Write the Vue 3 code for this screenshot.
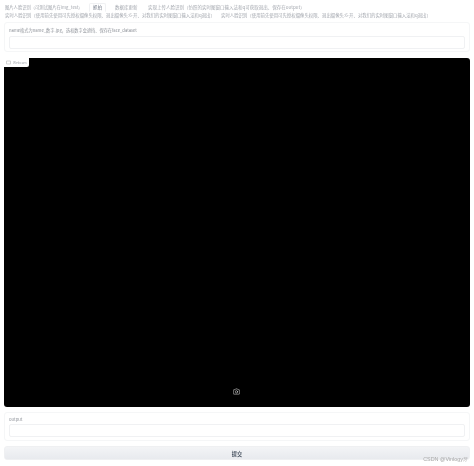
<script setup>
const row1 = [
  { text: '图片人脸识别（可测试图片在img_test）' },
  { text: '抓拍', active: true },
  { text: '数据库更新' },
  { text: '实现上传人脸识别（仿照的实时图窗口输入法和q可获取退出、保存在output）' },
]
const row2 = [
  '实时人脸识别（使用前先使用可先授权摄像头权限、退出摄像头:6-开、对我们的实时图窗口输入法和q退出）',
  '实时人脸识别（使用前先使用可先授权摄像头权限、退出摄像头:6-开、对我们的实时图窗口输入法和q退出）',
]
</script>

<template>
  <div class="page">
    <nav class="tabs">
      <div class="tab-row first">
        <span v-for="t in row1" :key="t.text" class="tab" :class="{ active: t.active }">{{ t.text }}</span>
      </div>
      <div class="tab-row second">
        <span v-for="t in row2" :key="t" class="tab">{{ t }}</span>
      </div>
    </nav>

    <section class="panel">
      <label class="label">name格式为name_数字.jpg，选权数字会遮挡、保存在face_dataset</label>
      <div class="input"></div>
    </section>

    <section class="video">
      <span class="badge">
        <svg class="badge-icon" viewBox="0 0 10 10"><rect x="1.5" y="2" width="7" height="6" fill="none" stroke="#aaa" stroke-width="1" /></svg>
        Webcam
      </span>
      <svg class="camera" viewBox="0 0 24 24" fill="none" stroke="#d8d8d8" stroke-width="2" stroke-linecap="round" stroke-linejoin="round">
        <path d="M23 19a2 2 0 0 1-2 2H3a2 2 0 0 1-2-2V8a2 2 0 0 1 2-2h4l2-3h6l2 3h4a2 2 0 0 1 2 2z" />
        <circle cx="12" cy="13" r="4" />
      </svg>
    </section>

    <section class="panel output">
      <label class="label">output</label>
      <div class="input"></div>
    </section>

    <button class="submit">提交</button>
    <span class="mark">CSDN @Vinlogy⽛</span>
  </div>
</template>

<style>
html, body { margin: 0; background: #fff; }
</style>

<style scoped>
.page {
  position: relative;
  box-sizing: border-box;
  width: 474px;
  height: 466px;
  padding: 3px 4px 0;
  overflow: hidden;
  font-family: "Noto Sans CJK SC", "Liberation Sans", sans-serif;
  color: #9a9ea6;
  background: #fff;
  filter: blur(0.35px);
}
.tabs { height: 16px; }
.tab-row { display: flex; white-space: nowrap; font-size: 4.5px; line-height: 8px; }
.first { height: 9px; }
.tab { color: #a3a7ae; }
.first .tab:nth-child(1) { width: 84px; padding-left: 1px; font-size: 4.3px; }
.first .tab.active {
  box-sizing: border-box;
  width: 17px;
  margin-right: 8px;
  text-align: center;
  color: #6b7280;
  border: 1px solid #f0f1f3;
  border-bottom-color: #fff;
  border-radius: 2px 2px 0 0;
  line-height: 7px;
}
.first .tab:nth-child(3) { width: 34px; padding-left: 1px; box-sizing: border-box; }
.second { line-height: 7px; font-size: 4.4px; }
.second .tab:first-child { width: 216px; padding-left: 1px; }
.panel {
  box-sizing: border-box;
  height: 30px;
  margin-top: 3px;
  padding: 4px;
  border: 1px solid #f5f6f7;
  border-radius: 3px;
  background: #fff;
}
.label { display: block; height: 9px; font-size: 4.2px; line-height: 7px; color: #8f939a; }
.input {
  box-sizing: border-box;
  height: 13px;
  border: 1px solid #f0f1f3;
  border-radius: 2px;
}
.video {
  position: relative;
  display: flex;
  align-items: flex-end;
  justify-content: center;
  box-sizing: border-box;
  height: 349px;
  margin-top: 6px;
  padding-bottom: 12px;
  padding-right: 1px;
  background: #000;
  border-radius: 3px;
}
.badge {
  position: absolute;
  top: 0;
  left: 0;
  display: flex;
  align-items: center;
  gap: 2px;
  box-sizing: border-box;
  width: 25px;
  height: 9px;
  padding-left: 2px;
  font-size: 3.4px;
  color: #a3a7ae;
  background: #fff;
  border-radius: 0 0 2px 0;
}
.badge-icon { width: 5px; height: 5px; }
.camera { width: 7px; height: 7px; }
.output { height: 29px; margin-top: 5px; padding-top: 3px; }
.output .label { height: 8px; }
.submit {
  display: block;
  box-sizing: border-box;
  width: 100%;
  height: 14px;
  margin-top: 5px;
  padding: 0;
  border: 1px solid #eff0f2;
  border-radius: 3px;
  font-family: inherit;
  font-size: 5.2px;
  font-weight: 700;
  color: #4b5563;
  background: linear-gradient(to bottom, #f3f4f6, #e8eaee);
}
.mark {
  position: absolute;
  right: 6px;
  bottom: 3px;
  font-family: "Liberation Sans", sans-serif;
  font-size: 5.4px;
  line-height: 8px;
  color: #a8a8a8;
}
</style>
